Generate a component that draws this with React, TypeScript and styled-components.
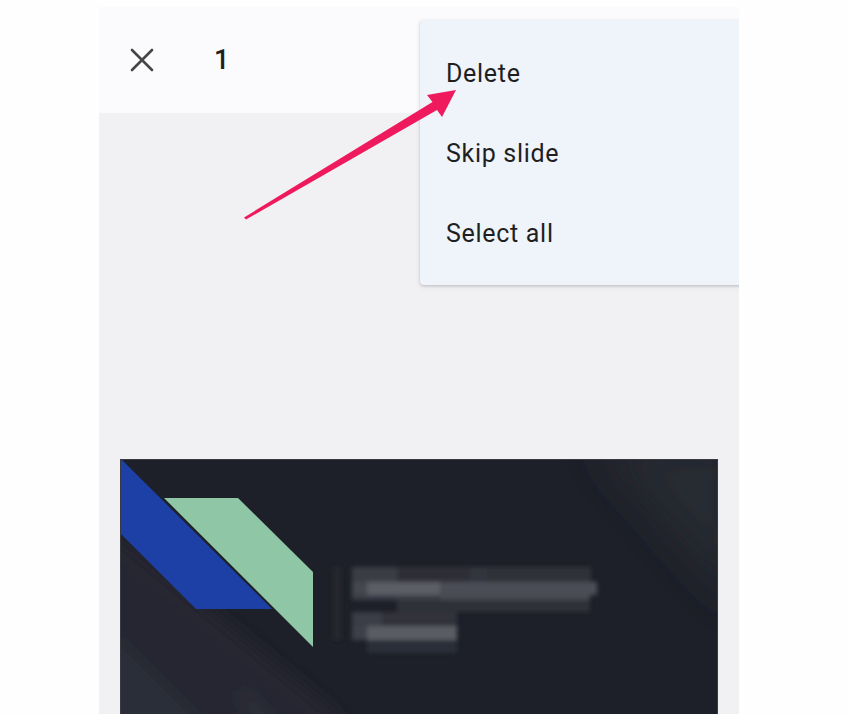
import { createGlobalStyle } from "styled-components";
import styled from "styled-components";

const GlobalStyle = createGlobalStyle`
  html, body {
    margin: 0;
    padding: 0;
    background: #fefefe;
    font-family: Roboto, "Noto Sans", "Liberation Sans", sans-serif;
  }
`;

const Page = styled.div`
  position: relative;
  width: 849px;
  height: 714px;
  padding: 7px 0 0 99px;
  box-sizing: border-box;
  overflow: hidden;
`;

const Phone = styled.div`
  position: relative;
  width: 640px;
  height: 707px;
  background: #f1f0f3;
  overflow: hidden;
  display: flex;
  flex-direction: column;
`;

const TopBar = styled.header`
  height: 106px;
  flex-shrink: 0;
  background: #fbfafd;
  display: flex;
  align-items: center;
  padding-left: 31px;
  gap: 61px;
`;

const CloseButton = styled.button`
  width: 24px;
  height: 24px;
  padding: 0;
  border: 0;
  background: none;
  display: flex;
  align-items: center;
  justify-content: center;
`;

const Count = styled.span`
  font-size: 27px;
  font-weight: 500;
  color: #1f1f1f;
  line-height: 1;
  margin-left: -1px;
`;

const Menu = styled.ul`
  position: absolute;
  top: 13px;
  left: 321px;
  width: 330px;
  margin: 0;
  padding: 14px 0 11px;
  list-style: none;
  background: #eff3fa;
  border-radius: 4px;
  box-shadow: 0 1px 3px rgba(0, 0, 0, 0.18), 0 2px 6px rgba(0, 0, 0, 0.06);
`;

const MenuItem = styled.li`
  height: 80px;
  line-height: 80px;
  padding-left: 26px;
  font-size: 25px;
  letter-spacing: 0.7px;
  color: #1f1f1f;
`;

const SlideArea = styled.main`
  padding: 347px 22px 0;
`;

const Slide = styled.div`
  width: 596px;
  height: 335px;
  background: #1e2029;
  box-shadow: 0 0 0 1px #3a3b42;
  svg {
    display: block;
  }
`;

const ArrowLayer = styled.svg`
  position: absolute;
  left: 0;
  top: 0;
  pointer-events: none;
`;

type Block = { x: number; y: number; w: number; h: number; c: string };

// pixelated (blurred) title text on the slide thumbnail
const blurBlocks: Block[] = [
  { x: 212, y: 107, w: 8, h: 73, c: "#25272f" },
  { x: 231, y: 107, w: 45, h: 15, c: "#3a3c45" },
  { x: 276, y: 107, w: 73, h: 15, c: "#2d2f38" },
  { x: 349, y: 107, w: 17, h: 15, c: "#33353e" },
  { x: 366, y: 107, w: 104, h: 15, c: "#2e3038" },
  { x: 231, y: 122, w: 15, h: 13, c: "#44464e" },
  { x: 246, y: 122, w: 73, h: 13, c: "#5b5d65" },
  { x: 319, y: 122, w: 157, h: 13, c: "#4c4e57" },
  { x: 319, y: 135, w: 150, h: 5, c: "#474951" },
  { x: 231, y: 135, w: 88, h: 5, c: "#3b3d46" },
  { x: 276, y: 140, w: 193, h: 12, c: "#2e3039" },
  { x: 231, y: 152, w: 30, h: 14, c: "#3b3d46" },
  { x: 261, y: 152, w: 75, h: 14, c: "#30323b" },
  { x: 231, y: 166, w: 15, h: 14, c: "#3e4049" },
  { x: 246, y: 166, w: 90, h: 14, c: "#5a5c64" },
  { x: 246, y: 180, w: 90, h: 13, c: "#2c2e37" },
];

function SlideArt() {
  return (
    <svg width="596" height="335" viewBox="0 0 596 335">
      <defs>
        <filter id="soft" x="-20%" y="-20%" width="140%" height="140%">
          <feGaussianBlur stdDeviation="9" />
        </filter>
        <filter id="wide" x="-30%" y="-30%" width="160%" height="160%">
          <feGaussianBlur stdDeviation="22" />
        </filter>
        <filter id="pix" x="-10%" y="-20%" width="120%" height="140%">
          <feGaussianBlur stdDeviation="2" />
        </filter>
      </defs>
      <rect width="596" height="335" fill="#1e2029" />
      <g filter="url(#soft)">
        <polygon points="-30,70 0,78 215,254 250,340 -30,340" fill="#262832" />
        <polygon points="-30,175 0,180 120,300 80,340 -30,340" fill="#2c2e38" />
        <polygon points="110,230 130,230 190,300 160,320" fill="#2c2e38" />
      </g>
      <g filter="url(#wide)">
        <polygon points="470,-20 620,-20 620,150" fill="#272933" />
      </g>
      <polygon points="0,-1 151,149 75,149 0,74" fill="#1d40a6" />
      <polygon points="43,38 117,38 192,112 192,187" fill="#8fc6a6" />
      <g filter="url(#pix)">
        {blurBlocks.map((b, i) => (
          <rect key={i} x={b.x} y={b.y} width={b.w} height={b.h} fill={b.c} />
        ))}
      </g>
    </svg>
  );
}

export default function App() {
  return (
    <>
      <GlobalStyle />
      <Page>
        <Phone>
          <TopBar>
            <CloseButton aria-label="Close">
              <svg width="24" height="24" viewBox="0 0 24 24">
                <path
                  d="M2 2 L22 22 M22 2 L2 22"
                  stroke="#444746"
                  strokeWidth="2.6"
                  strokeLinecap="round"
                />
              </svg>
            </CloseButton>
            <Count>1</Count>
          </TopBar>
          <SlideArea>
            <Slide>
              <SlideArt />
            </Slide>
          </SlideArea>
          <Menu>
            <MenuItem>Delete</MenuItem>
            <MenuItem>Skip slide</MenuItem>
            <MenuItem>Select all</MenuItem>
          </Menu>
        </Phone>
        <ArrowLayer width="849" height="714" viewBox="0 0 849 714">
          <polygon
            points="244,217.5 432.5,102 427,95 456,90 442,117 437,110 246,219.5"
            fill="#ef1a5e"
          />
        </ArrowLayer>
      </Page>
    </>
  );
}
